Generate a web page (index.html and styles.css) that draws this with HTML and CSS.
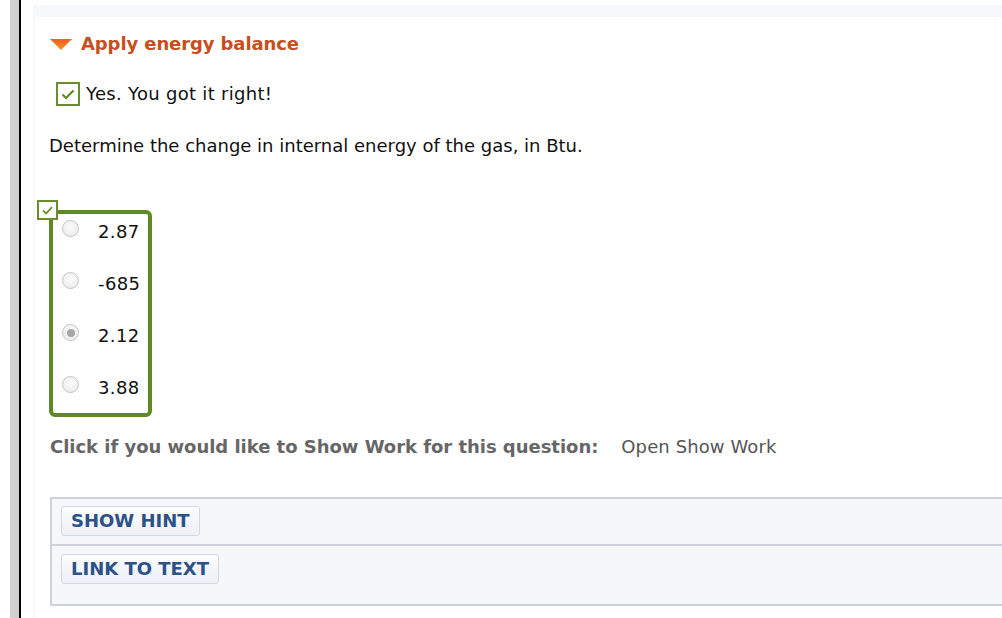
FILE: index.html
```html
<!DOCTYPE html>
<html>
<head>
<meta charset="utf-8">
<link rel="stylesheet" href="styles.css">
</head>
<body>
<div class="page">
  <div class="rail"><div class="rail-gray"></div><div class="rail-black"></div></div>
  <div class="panel">
    <div class="content">
      <div class="heading">
        <svg class="tri" width="22" height="12" viewBox="0 0 22 12"><defs><linearGradient id="g" x1="0" y1="0" x2="0" y2="1"><stop offset="0" stop-color="#f15a22"/><stop offset="1" stop-color="#f7941d"/></linearGradient></defs><polygon points="0,0 22,0 11,11" fill="url(#g)"/></svg>
        <span class="heading-text">Apply energy balance</span>
      </div>
      <div class="feedback">
        <span class="check big"><svg width="14" height="11" viewBox="0 0 14 11"><polyline points="1.5,5.5 5,9 12.5,1.5" fill="none" stroke="#5e8b22" stroke-width="2.2"/></svg></span>
        <span>Yes. You got it right!</span>
      </div>
      <p class="question">Determine the change in internal energy of the gas, in Btu.</p>
      <div class="answer-wrap">
        <span class="check small"><svg width="11" height="9" viewBox="0 0 11 9"><polyline points="1,4.5 4,7.5 10,1.2" fill="none" stroke="#5e8b22" stroke-width="1.7"/></svg></span>
        <div class="choices">
          <div class="choice"><span class="radio"></span><span class="val">2.87</span></div>
          <div class="choice"><span class="radio"></span><span class="val">-685</span></div>
          <div class="choice"><span class="radio on"></span><span class="val">2.12</span></div>
          <div class="choice"><span class="radio"></span><span class="val">3.88</span></div>
        </div>
      </div>
      <div class="showwork">
        <span class="sw-label">Click if you would like to Show Work for this question:</span>
        <span class="sw-link">Open Show Work</span>
      </div>
      <div class="tools">
        <div class="tool-row"><span class="btn">SHOW HINT</span></div>
        <div class="tool-row last"><span class="btn">LINK TO TEXT</span></div>
      </div>
    </div>
  </div>
</div>
</body>
</html>
```
FILE: styles.css
```css
html, body {
  margin: 0;
  padding: 0;
  background: #fff;
}
body {
  font-family: "DejaVu Sans", Verdana, sans-serif;
  color: #111;
  overflow: hidden;
}
.page {
  display: flex;
  height: 618px;
}
.rail {
  display: flex;
  width: 33px;
  padding-left: 10px;
  box-sizing: border-box;
  flex: none;
}
.rail-gray {
  width: 9px;
  background: #d1d1d1;
}
.rail-black {
  width: 2px;
  background: #000;
}
.panel {
  flex: 1;
  margin-top: 5px;
  background: #f7f8fa;
  padding: 12px 0 0 2px;
}
.content {
  background: #fff;
  height: 100%;
  padding-left: 14px;
  padding-top: 18px;
  box-sizing: border-box;
}
.heading {
  display: flex;
  align-items: center;
  gap: 9px;
  padding-left: 1px;
  height: 18px;
}
.tri {
  display: block;
  margin-top: 1px;
}
.heading-text {
  color: #c84e1d;
  font-weight: bold;
  font-size: 18px;
  line-height: 18px;
  letter-spacing: -0.1px;
}
.feedback {
  display: flex;
  align-items: center;
  gap: 6px;
  margin-top: 29px;
  padding-left: 7px;
  font-size: 18px;
  line-height: 24px;
  height: 24px;
  letter-spacing: 0.3px;
}
.check {
  display: flex;
  align-items: center;
  justify-content: center;
  border: 2px solid #6a8e2f;
  background: #fff;
  box-sizing: border-box;
}
.check.big {
  width: 24px;
  height: 24px;
}
.check.small {
  width: 21px;
  height: 20px;
  position: absolute;
  left: -12px;
  top: -10px;
  z-index: 2;
}
.question {
  margin: 29px 0 0;
  font-size: 18px;
  line-height: 22px;
}
.answer-wrap {
  position: relative;
  margin-top: 53px;
  width: 103px;
}
.choices {
  border: 4px solid #5d8a22;
  border-radius: 6px;
  box-sizing: border-box;
  width: 103px;
  height: 207px;
  display: flex;
  flex-direction: column;
  gap: 16px;
}
.choice {
  display: flex;
  align-items: flex-start;
  height: 36px;
  font-size: 18px;
  color: #111;
}
.val {
  margin-top: 7px;
  line-height: 22px;
  letter-spacing: 0.4px;
}
.radio {
  width: 15px;
  height: 15px;
  border-radius: 50%;
  border: 1px solid #c4c4c4;
  background: radial-gradient(circle at 50% 40%, #fbfbfb 0%, #e8e8e8 100%);
  margin-left: 9px;
  margin-right: 19px;
  margin-top: 6px;
  position: relative;
  flex: none;
}
.radio.on::after {
  content: "";
  position: absolute;
  left: 3.5px;
  top: 3.5px;
  width: 8px;
  height: 8px;
  border-radius: 50%;
  background: #a6a6a6;
}
.showwork {
  display: flex;
  align-items: center;
  margin-top: 18px;
  padding-left: 1px;
  font-size: 18px;
  height: 22px;
}
.sw-label {
  color: #666;
  font-weight: bold;
  letter-spacing: -0.03px;
}
.sw-link {
  color: #555;
  margin-left: 23px;
  letter-spacing: 0.1px;
}
.tools {
  margin-top: 40px;
  margin-left: 1px;
  border: 2px solid #cdd3dd;
  border-right: none;
  background: #f6f7fa;
}
.tool-row {
  height: 47px;
  padding: 7px 0 0 9px;
  box-sizing: border-box;
  border-bottom: 2px solid #cdd3dd;
}
.tool-row.last {
  border-bottom: none;
  height: 58px;
  padding-top: 8px;
}
.btn {
  display: inline-block;
  height: 30px;
  line-height: 28px;
  padding: 0 9px;
  box-sizing: border-box;
  border: 1px solid #d3d9e2;
  border-radius: 3px;
  background: linear-gradient(#fbfcfd, #edf0f5);
  color: #2c5186;
  font-weight: bold;
  font-size: 18px;
}
```
